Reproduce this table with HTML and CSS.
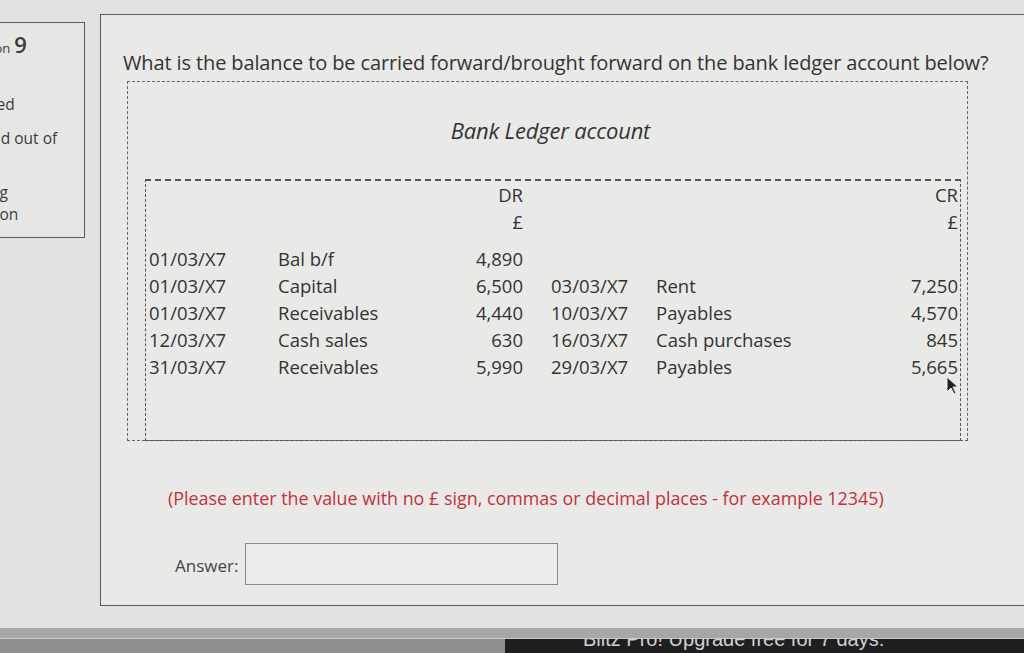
FILE: index.html
```html
<!DOCTYPE html>
<html lang="en">
<head>
<meta charset="utf-8">
<title>Question 9</title>
<link rel="stylesheet" href="styles.css">
</head>
<body>
<div class="screen">
  <div class="content">
    <aside class="info">
      <div class="qno"><span class="qlabel">Question</span> <span class="qnum">9</span></div>
      <div class="state">Not yet<br>answered</div>
      <div class="grade">Marked out of<br><span class="faded">1.00</span></div>
      <div class="flag">
        <svg class="flag-icon" width="16" height="16" viewBox="0 0 16 16"><path d="M3 1v14M3 2h9l-2 3 2 3H3" fill="none" stroke="#555" stroke-width="1.4"/></svg>
        <span>Flag</span>
      </div>
      <div class="flag-rest">question</div>
    </aside>
    <main class="panel">
      <p class="question">What is the balance to be carried forward/brought forward on the bank ledger account below?</p>
      <div class="ledger">
        <div class="ledger-title">Bank Ledger account</div>
        <div class="ledger-table">
          <div class="head-row">
            <span></span><span></span><span class="amt">DR</span><span></span><span></span><span class="amt">CR</span>
          </div>
          <div class="head-row">
            <span></span><span></span><span class="amt">£</span><span></span><span></span><span class="amt">£</span>
          </div>
          <div class="rows">
            <div class="row"><span>01/03/X7</span><span>Bal b/f</span><span class="amt">4,890</span><span class="d2"></span><span></span><span class="amt"></span></div>
            <div class="row"><span>01/03/X7</span><span>Capital</span><span class="amt">6,500</span><span class="d2">03/03/X7</span><span>Rent</span><span class="amt">7,250</span></div>
            <div class="row"><span>01/03/X7</span><span>Receivables</span><span class="amt">4,440</span><span class="d2">10/03/X7</span><span>Payables</span><span class="amt">4,570</span></div>
            <div class="row"><span>12/03/X7</span><span>Cash sales</span><span class="amt">630</span><span class="d2">16/03/X7</span><span>Cash purchases</span><span class="amt">845</span></div>
            <div class="row"><span>31/03/X7</span><span>Receivables</span><span class="amt">5,990</span><span class="d2">29/03/X7</span><span>Payables</span><span class="amt">5,665</span></div>
          </div>
        </div>
      </div>
      <p class="note">(Please enter the value with no £ sign, commas or decimal places - for example 12345)</p>
      <div class="answer">
        <label class="answer-label" for="ans">Answer:</label>
        <input class="answer-input" id="ans" type="text">
      </div>
    </main>
  </div>
  <div class="taskbar">
    <div class="strip"></div>
    <div class="bar">
      <div class="bar-left"></div>
      <div class="bar-right"><span class="promo">Blitz Pro! Upgrade free for 7 days.</span></div>
    </div>
  </div>
</div>
<svg class="cursor" width="14" height="20" viewBox="0 0 14 20"><path d="M1 1v15l4-4 3 6 2-1-3-6h5z" fill="#222" stroke="#eee" stroke-width="1"/></svg>
</body>
</html>
```

FILE: styles.css
```css
html, body {
  margin: 0;
  padding: 0;
}
body {
  width: 1024px;
  height: 653px;
  overflow: hidden;
  background: #e2e3e1;
  font-family: "Open Sans", "Liberation Sans", sans-serif;
  color: #333;
  position: relative;
}
.screen {
  display: flex;
  flex-direction: column;
  height: 653px;
}
.content {
  display: flex;
  align-items: flex-start;
  height: 628px;
  gap: 15px;
}
.info {
  flex: 0 0 auto;
  box-sizing: border-box;
  width: 145px;
  height: 216px;
  margin-left: -60px;
  margin-top: 22px;
  border: 1px solid #5a5b5b;
  background: #e6e7e5;
  padding: 8px 0 0 14px;
  font-size: 15.5px;
  line-height: 22px;
  color: #3a3b3c;
}
.qno {
  height: 26px;
  line-height: 26px;
}
.qlabel {
  font-size: 13px;
}
.qnum {
  font-size: 22px;
  font-weight: 600;
}
.state {
  margin-top: 14px;
  margin-left: -11px;
}
.grade {
  margin-top: 12px;
}
.faded {
  color: transparent;
}
.flag {
  margin-top: 10px;
  display: flex;
  gap: 8px;
  align-items: flex-start;
}
.flag-icon {
  margin-top: 3px;
}
.panel {
  flex: 1 1 auto;
  box-sizing: border-box;
  margin-top: 14px;
  margin-right: -40px;
  height: 592px;
  border: 1px solid #5a5b5b;
  background: #e9eae8;
  padding: 34px 0 0 22px;
}
.question {
  margin: 0;
  font-size: 20px;
  line-height: 27px;
  letter-spacing: -0.12px;
  color: #333;
}
.ledger {
  width: 841px;
  margin: 5px 0 0 4px;
  border: 1px dashed #666;
  box-sizing: border-box;
}
.ledger-title {
  text-align: center;
  font-style: italic;
  font-size: 22px;
  line-height: 27px;
  padding: 35px 0 35px;
  color: #333;
  letter-spacing: -0.2px;
  margin-left: 6px;
}
.ledger-table {
  margin: 0 6px -1px 17px;
  border: 1px dashed #555;
  border-top: 2px dashed #555;
  padding: 0 2px 60px 3px;
  font-size: 18.5px;
  color: #333;
}
.head-row, .row {
  display: grid;
  grid-template-columns: 129px 170px 75px 133px 200px 1fr;
  height: 27px;
  line-height: 27px;
}
.rows {
  margin-top: 10px;
}
.amt {
  text-align: right;
}
.d2 {
  padding-left: 28px;
}
.note {
  margin: 45px 0 0 45px;
  font-size: 17.9px;
  line-height: 24px;
  color: #c5303a;
}
.answer {
  display: flex;
  align-items: center;
  gap: 7px;
  margin: 33px 0 0 52px;
}
.answer-label {
  font-size: 17px;
  color: #444;
  margin-top: 3px;
}
.answer-input {
  box-sizing: border-box;
  width: 313px;
  height: 42px;
  border: 1px solid #8a8b8b;
  background: #ecedeb;
  font: inherit;
}
.taskbar {
  display: flex;
  flex-direction: column;
  height: 25px;
}
.strip {
  height: 10px;
  background: #a6a7a6;
  border-bottom: 1px solid #c9cac9;
}
.bar {
  display: flex;
  height: 14px;
}
.bar-left {
  width: 505px;
  background: #8d8e8d;
}
.bar-right {
  flex: 1;
  background: #1f1f21;
  overflow: hidden;
  padding-left: 78px;
}
.promo {
  display: block;
  margin-top: -10px;
  font-family: "Liberation Sans", sans-serif;
  font-size: 20px;
  line-height: 20px;
  color: #cfd0d2;
  white-space: nowrap;
}
.cursor {
  position: absolute;
  left: 946px;
  top: 376px;
}
```
